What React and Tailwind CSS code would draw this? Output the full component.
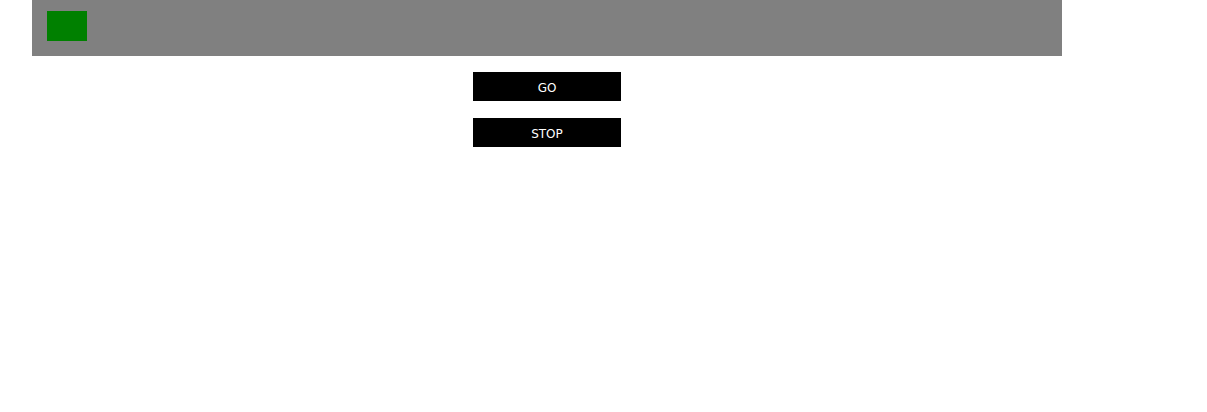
import React from 'react';

export default function App() {
  return (
    <div className="ml-[32px] w-[1030px]" style={{ fontFamily: '"DejaVu Sans", Verdana, sans-serif' }}>
      <div className="h-[56px] bg-[#808080] pl-[15px] pt-[11px]">
        <div className="w-[40px] h-[30px] bg-[#008000]" />
      </div>
      <div className="flex flex-col items-center pt-[16px] gap-[17px]">
        <button className="w-[148px] h-[29px] pt-[2px] bg-black text-white text-[12px] flex items-center justify-center">GO</button>
        <button className="w-[148px] h-[29px] pt-[2px] bg-black text-white text-[12px] flex items-center justify-center">STOP</button>
      </div>
    </div>
  );
}
